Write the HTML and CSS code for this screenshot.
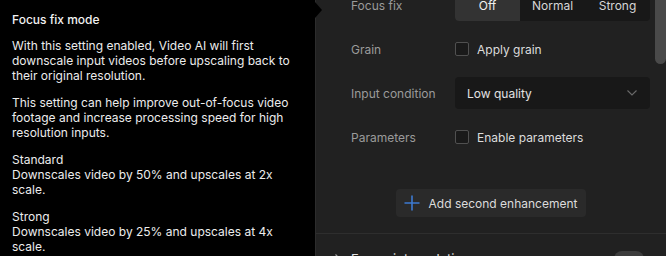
FILE: index.html
```html
<!DOCTYPE html>
<html>
<head>
<meta charset="utf-8">
<link rel="stylesheet" href="styles.css">
</head>
<body>
<div class="app">
  <aside class="tip">
    <div class="tip-title">Focus fix mode</div>
    <p>With this setting enabled, Video AI will first downscale input videos before upscaling back to their original resolution.</p>
    <p>This setting can help improve out-of-focus video footage and increase processing speed for high resolution inputs.</p>
    <p>Standard<br>Downscales video by 50% and upscales at 2x scale.</p>
    <p>Strong<br>Downscales video by 25% and upscales at 4x scale.</p>
    <span class="tip-arrow"></span>
  </aside>
  <main class="panel">
    <div class="rows">
      <div class="row">
        <span class="label">Focus fix</span>
        <div class="seg">
          <span class="seg-item active">Off</span>
          <span class="seg-item">Normal</span>
          <span class="seg-item">Strong</span>
        </div>
      </div>
      <div class="row">
        <span class="label">Grain</span>
        <label class="check"><span class="box"></span>Apply grain</label>
      </div>
      <div class="row">
        <span class="label">Input condition</span>
        <div class="select">
          <span>Low quality</span>
          <svg class="chev" width="10" height="6" viewBox="0 0 10 6"><path d="M0.5 0.5 L5 5 L9.5 0.5" fill="none" stroke="#6a6a6a" stroke-width="1.1"/></svg>
        </div>
      </div>
      <div class="row">
        <span class="label">Parameters</span>
        <label class="check"><span class="box"></span>Enable parameters</label>
      </div>
    </div>
    <div class="add-wrap">
      <button class="add">
        <svg width="16" height="16" viewBox="0 0 16 16"><path d="M8 0.5 V15.5 M0.5 8 H15.5" stroke="#3d7ad1" stroke-width="1.6" fill="none"/></svg>
        <span>Add second enhancement</span>
      </button>
    </div>
    <div class="section">
      <svg class="sec-chev" width="6" height="10" viewBox="0 0 6 10"><path d="M0.5 0.5 L5 5 L0.5 9.5" fill="none" stroke="#9a9a9a" stroke-width="1.2"/></svg>
      <span class="sec-title">Frame interpolation</span>
      <span class="toggle"></span>
    </div>
    <div class="scrollbar"><span class="thumb"></span></div>
  </main>
</div>
</body>
</html>
```
FILE: styles.css
```css
html, body {
  margin: 0;
  padding: 0;
  background: #000;
  overflow: hidden;
}
body {
  font-family: Inter, "Noto Sans", sans-serif;
  width: 666px;
  height: 256px;
}
.app {
  display: flex;
  height: 256px;
}
.tip {
  position: relative;
  width: 315px;
  flex: none;
  background: #000;
  color: #ececec;
  font-size: 12px;
  line-height: 15px;
  padding: 12px 12px 0 12px;
  box-sizing: border-box;
}
.tip-title {
  font-weight: 500;
  color: #f2f2f2;
  margin-bottom: 11px;
}
.tip p {
  margin: 0 0 12px 0;
}
.tip-arrow {
  position: absolute;
  right: -7px;
  top: 2px;
  width: 0;
  height: 0;
  border-top: 8px solid transparent;
  border-bottom: 8px solid transparent;
  border-left: 7px solid #000;
  z-index: 2;
}
.panel {
  position: relative;
  flex: 1;
  background: #212121;
  border-left: 1px solid #2c2c2c;
  overflow: hidden;
}
.rows {
  display: flex;
  flex-direction: column;
  gap: 12px;
  margin-top: -11px;
  padding: 0 16px 0 35px;
}
.row {
  display: flex;
  align-items: center;
  height: 32px;
  font-size: 12px;
}
.label {
  width: 104px;
  flex: none;
  color: #9b9b9b;
}
.seg {
  flex: 1;
  display: flex;
  height: 32px;
  background: #181818;
  border-radius: 4px;
  overflow: hidden;
}
.seg-item {
  flex: 1;
  display: flex;
  align-items: center;
  justify-content: center;
  color: #d6d6d6;
}
.seg-item.active {
  background: #333333;
  color: #f0f0f0;
}
.check {
  display: flex;
  align-items: center;
  gap: 8px;
  color: #dcdcdc;
}
.box {
  width: 12px;
  height: 12px;
  border: 1px solid #505050;
  background: #1a1a1a;
  border-radius: 2px;
}
.select {
  flex: 1;
  display: flex;
  align-items: center;
  justify-content: space-between;
  height: 32px;
  background: #181818;
  border-radius: 4px;
  padding: 0 13px 0 12px;
  color: #e2e2e2;
}
.add-wrap {
  display: flex;
  justify-content: center;
  margin-top: 36px;
}
.add {
  display: flex;
  align-items: center;
  gap: 9px;
  height: 28px;
  padding: 0 9px 0 8px;
  background: #2a2a2a;
  border: none;
  border-radius: 4px;
  font-family: Inter, "Noto Sans", sans-serif;
  font-size: 12px;
  color: #dcdcdc;
}
.section {
  margin-top: 16px;
  border-top: 1px solid #2e2e2e;
  height: 50px;
  display: flex;
  align-items: center;
  padding: 0 22px 0 19px;
  font-size: 13px;
  color: #e6e6e6;
}
.sec-chev {
  margin-right: 10px;
}
.sec-title {
  flex: 1;
}
.toggle {
  width: 30px;
  height: 16px;
  border-radius: 8px;
  background: #3c3c3c;
}
.scrollbar {
  position: absolute;
  right: 0;
  top: 0;
  width: 12px;
  height: 100%;
}
.thumb {
  position: absolute;
  left: 1px;
  top: -20px;
  width: 11px;
  height: 84px;
  border-radius: 6px;
  background: #4a4a4a;
}
```
